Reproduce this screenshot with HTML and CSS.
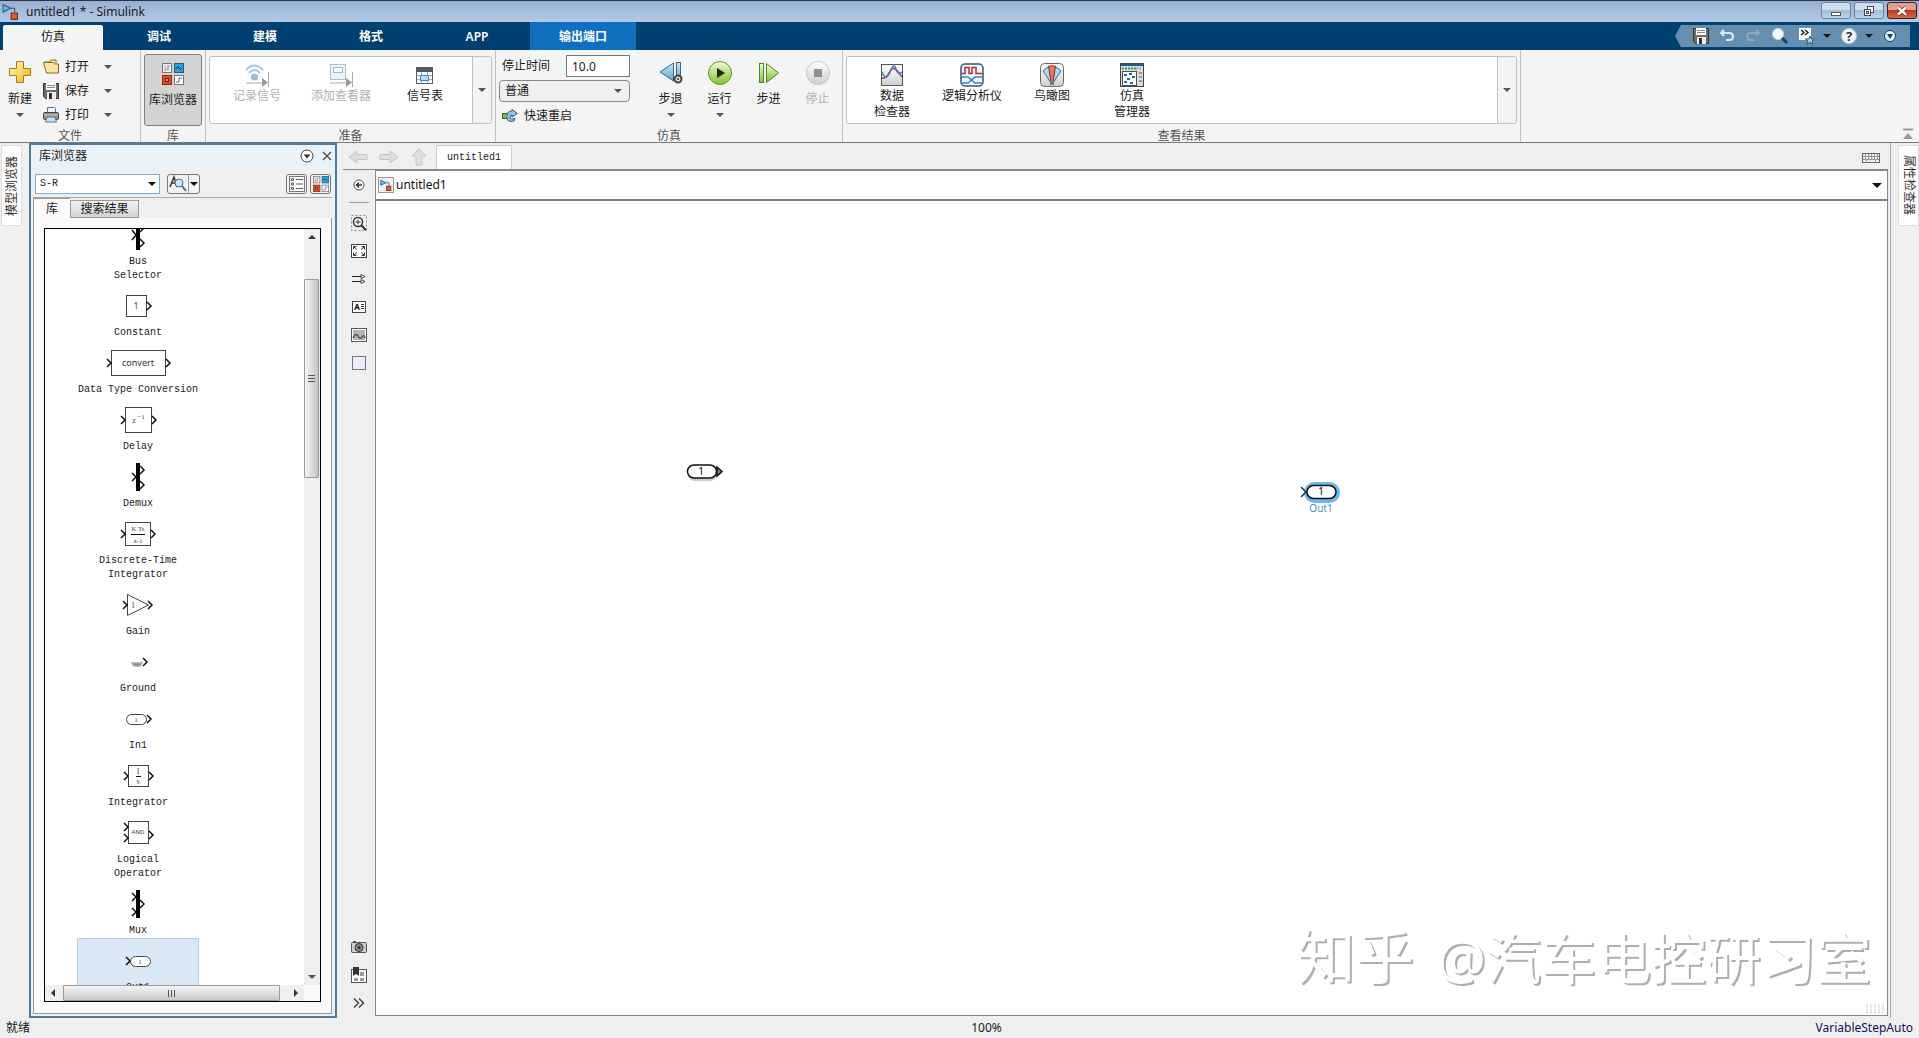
FILE: index.html
```html
<!DOCTYPE html>
<html lang="zh-CN">
<head>
    <meta charset="UTF-8">
    <meta name="viewport" content="width=device-width, initial-scale=1.0">
    <title>untitled1 * - Simulink</title>
    <link rel="stylesheet" href="styles.css">
</head>
<body>
    <!-- shared icons -->
    <svg class="defs" width="0" height="0" aria-hidden="true">
        <defs>
            <linearGradient id="g-gold" x1="0" y1="0" x2="1" y2="1"><stop offset="0" stop-color="#fffbd0"/><stop offset="1" stop-color="#eeb400"/></linearGradient>
            <linearGradient id="g-blue" x1="0" y1="0" x2="0" y2="1"><stop offset="0" stop-color="#cde9fa"/><stop offset="1" stop-color="#5b9fd0"/></linearGradient>
            <linearGradient id="g-green" x1="0" y1="0" x2="0" y2="1"><stop offset="0" stop-color="#effad8"/><stop offset="1" stop-color="#7cc52c"/></linearGradient>
            <linearGradient id="g-grey" x1="0" y1="0" x2="0" y2="1"><stop offset="0" stop-color="#ffffff"/><stop offset="1" stop-color="#cfcfcf"/></linearGradient>
            <symbol id="floppy" viewBox="0 0 16 16">
                <path d="M0.5 0.5h15v15h-13l-2-2z" fill="#6b6b6b" stroke="#333"/>
                <rect x="3" y="0" width="10" height="7" fill="#fff"/>
                <path d="M4 2.5h8M4 4.5h8" stroke="#888"/>
                <rect x="4" y="9" width="9" height="7" fill="#eee"/>
                <rect x="6" y="10" width="3" height="6" fill="#333"/>
            </symbol>
            <symbol id="libgrid" viewBox="0 0 22 22">
                <rect x="0.5" y="0.5" width="9" height="9" fill="#f4f4f4" stroke="#777"/>
                <path d="M3 2v6M3 8l5-6M6 2v6" stroke="#999" fill="none"/>
                <rect x="12.5" y="0.5" width="9" height="9" fill="#2aa0dc" stroke="#1b5f8a"/>
                <path d="M14 6q1.5-4 3-1t3 0" stroke="#063a5c" fill="none"/>
                <rect x="0.5" y="12.5" width="9" height="9" fill="#e04e22" stroke="#8a2a0a"/>
                <rect x="3.5" y="15.5" width="3" height="3" fill="#f7a080" stroke="#6d1c00"/>
                <rect x="12.5" y="12.5" width="9" height="9" fill="#fff" stroke="#777"/>
                <path d="M14 19h3v-4h3" stroke="#666" fill="none"/>
            </symbol>
            <symbol id="model" viewBox="0 0 16 16">
                <path d="M1 1.5l7 3.5-7 3.5z" fill="#6db9e4" stroke="#1b5f8a"/>
                <path d="M8 5h4v4" stroke="#1b5f8a" fill="none"/>
                <rect x="8.5" y="9.5" width="6" height="6" fill="#dd5a2b" stroke="#7c2a10"/>
            </symbol>
            <symbol id="arrow" viewBox="0 0 20 14">
                <path d="M1 7l8-6v3.5h10v5h-10v3.5z" fill="#dedede" stroke="#c4c4c4"/>
            </symbol>
        </defs>
    </svg>

    <header class="titlebar">
        <svg class="app-icon" width="17" height="17"><use href="#model"/></svg>
        <span class="window-title">untitled1 * - Simulink</span>
        <div class="window-buttons">
            <button class="win-btn" aria-label="最小化"><svg width="12" height="12"><rect x="1.5" y="7.5" width="9" height="3" fill="#fff" stroke="#555"/></svg></button>
            <button class="win-btn" aria-label="还原"><svg width="12" height="12"><rect x="4.5" y="1.5" width="6" height="6" fill="#fff" stroke="#445"/><rect x="1.5" y="4.5" width="6" height="6" fill="#fff" stroke="#445"/><rect x="3.5" y="6.5" width="2" height="2" fill="none" stroke="#445"/></svg></button>
            <button class="win-btn close" aria-label="关闭"><svg width="12" height="12"><path d="M2 2.5l8 7M10 2.5l-8 7" stroke="#622" stroke-width="4"/><path d="M2 2.5l8 7M10 2.5l-8 7" stroke="#fff" stroke-width="2.5"/></svg></button>
        </div>
    </header>

    <nav class="tabbar">
        <button class="tab active">仿真</button>
        <button class="tab">调试</button>
        <button class="tab">建模</button>
        <button class="tab">格式</button>
        <button class="tab">APP</button>
        <button class="tab context">输出端口</button>
        <div class="quick">
            <button aria-label="保存"><svg width="16" height="16"><use href="#floppy"/></svg></button>
            <button aria-label="撤销"><svg width="16" height="16"><path d="M5 2l-3 3 3 3M2 5h8q4 0 4 3.5t-4 3.5h-3" fill="none" stroke="#d6ecfa" stroke-width="2"/></svg></button>
            <button aria-label="重做"><svg width="16" height="16"><path d="M11 2l3 3-3 3M14 5h-8q-4 0-4 3.5t4 3.5h3" fill="none" stroke="#86a9c4" stroke-width="2"/></svg></button>
            <button aria-label="查找"><svg width="18" height="18"><path d="M10 10l6 6" stroke="#1c3b58" stroke-width="3"/><circle cx="7" cy="7" r="5.5" fill="#f4fafd" stroke="#c5d4de"/></svg></button>
            <button class="with-caret" aria-label="收藏"><svg width="16" height="17"><rect x="0" y="0" width="12" height="12" fill="#fff"/><path d="M2 2l3 2.5-3 2.5M6 2l3 2.5-3 2.5" fill="none" stroke="#222" stroke-width="1.5"/><path d="M11 8l1.3 3h3.2l-2.500 2 1 3.500-3-2-3 2 1-3.500-2.500-2h3.200z" fill="#a9cdec" stroke="#37597a"/></svg><i class="caret black"></i></button>
            <button class="with-caret" aria-label="帮助"><svg width="16" height="16"><circle cx="8" cy="8" r="7.5" fill="#f2f6f9" stroke="#b8c8d4"/><text x="8" y="13" class="help-mark">?</text></svg><i class="caret black"></i></button>
            <button aria-label="更多"><svg width="14" height="14"><circle cx="7" cy="7" r="5.5" fill="#e8f4fb" stroke="#0d3f66"/><path d="M4 5h6l-3 5z" fill="#0d3f66"/></svg></button>
        </div>
    </nav>

    <div class="ribbon">
        <section class="group file">
            <div class="group-body">
                <button class="big new">
                    <svg width="22" height="22"><path d="M7.5 0.5h7v7h7v7h-7v7h-7v-7h-7v-7h7z" fill="url(#g-gold)" stroke="#a87b10"/></svg>
                    <span>新建</span><i class="caret"></i>
                </button>
                <div class="stack">
                    <button class="small"><svg width="16" height="16"><path d="M1 3h6l1-2h5v3" fill="#f7e7a0" stroke="#8c6d1f"/><path d="M0.5 3.5l3 10.5h12v-9h-4l-1-1.5z" fill="#f8e6a0" stroke="#8c6d1f"/></svg><span>打开</span><i class="caret"></i></button>
                    <button class="small"><svg width="16" height="16"><use href="#floppy"/></svg><span>保存</span><i class="caret"></i></button>
                    <button class="small"><svg width="16" height="16"><path d="M4.5 6v-5.5h7l1 1v4.5" fill="#e6f1fa" stroke="#5c7288"/><rect x="0.5" y="5.5" width="15" height="7" rx="1" fill="#8b9094" stroke="#444"/><path d="M1 8h14" stroke="#d5d5d5"/><path d="M4 10h8l1.5 5h-11z" fill="#c9e2f5" stroke="#5c7288"/></svg><span>打印</span><i class="caret"></i></button>
                </div>
            </div>
            <h2>文件</h2>
        </section>

        <section class="group library">
            <div class="group-body">
                <button class="big pressed"><svg width="22" height="22"><use href="#libgrid"/></svg><span>库浏览器</span></button>
            </div>
            <h2>库</h2>
        </section>

        <section class="group prepare">
            <div class="group-body">
                <div class="gallery">
                    <button class="gallery-item" disabled><svg width="24" height="24"><path d="M1 7q8-9 17 0M4 10q5.5-6 11 0" fill="none" stroke="#a9c8dc" stroke-width="2"/><circle cx="9.5" cy="14" r="3.5" fill="#9dbdd3"/><path d="M1 20h18M23.5 9v15" stroke="#aaa"/><path d="M17 15l6 4.5-6 4.5z" fill="#999"/></svg><span>记录信号</span></button>
                    <button class="gallery-item" disabled><svg width="24" height="24"><rect x="1.5" y="1.5" width="15" height="15" fill="#edf4f8" stroke="#a9bfcc"/><rect x="4.5" y="4.5" width="9" height="5" fill="#fff" stroke="#9cbdd0"/><path d="M1 20h18M23.5 9v15" stroke="#aaa"/><path d="M17 15l6 4.5-6 4.5z" fill="#999"/></svg><span>添加查看器</span></button>
                    <button class="gallery-item"><svg width="18" height="24"><rect x="0.5" y="4.5" width="16" height="16" fill="#fff" stroke="#55606a"/><rect x="1" y="5" width="15" height="4" fill="#4d5a66"/><path d="M1 12.5h15M1 16.5h15M5.5 9v11M11.5 9v11" stroke="#9ab"/><rect x="4.5" y="12.5" width="8" height="5" fill="#b9dcf8" stroke="#4389c8"/></svg><span>信号表</span></button>
                    <button class="gallery-more" aria-label="展开准备"><i class="caret"></i></button>
                </div>
            </div>
            <h2>准备</h2>
        </section>

        <section class="group simulate">
            <div class="group-body">
                <div class="sim-form">
                    <div class="field"><label for="stop-time">停止时间</label><input id="stop-time" type="text" value="10.0"></div>
                    <div class="select-wrap"><select aria-label="仿真模式"><option>普通</option></select><i class="caret"></i></div>
                    <button class="small restart"><svg width="16" height="14"><rect x="0.5" y="4.5" width="6" height="5" fill="#7dbb58" stroke="#3b6b22"/><path d="M5 7q0-5 5-5v-1.5l5.5 4-5.5 3.5v-2q-2 0-2 2q0 3 5 1.5l-1 2.5q-7 2-7-4" fill="#8ec3ea" stroke="#2d5d86"/></svg><span>快速重启</span></button>
                </div>
                <button class="big"><svg width="24" height="24"><path d="M14.5 2v18l-13.5-9z" fill="url(#g-blue)" stroke="#37678c"/><rect x="17.5" y="1.5" width="4" height="18" fill="url(#g-blue)" stroke="#37678c"/><circle cx="19" cy="18" r="3.5" fill="#ddd" stroke="#444" stroke-width="2"/><circle cx="19" cy="18" r="1" fill="#333"/></svg><span>步退</span><i class="caret"></i></button>
                <button class="big"><svg width="24" height="24"><circle cx="12" cy="12" r="11.5" fill="url(#g-green)" stroke="#5d9a24"/><path d="M9 7v10l8-5z" fill="#222"/></svg><span>运行</span><i class="caret"></i></button>
                <button class="big"><svg width="24" height="24"><rect x="2.5" y="2.5" width="4" height="19" fill="url(#g-green)" stroke="#4f7e2c"/><path d="M9.5 2.5v19l12-9.5z" fill="url(#g-green)" stroke="#4f7e2c"/></svg><span>步进</span></button>
                <button class="big" disabled><svg width="24" height="24"><circle cx="12" cy="12" r="11.5" fill="url(#g-grey)" stroke="#c4c4c4"/><rect x="8" y="8" width="8" height="8" fill="#8f8f8f"/></svg><span>停止</span></button>
            </div>
            <h2>仿真</h2>
        </section>

        <section class="group results">
            <div class="group-body">
                <div class="gallery">
                    <button class="gallery-item"><svg width="24" height="24"><rect x="1.5" y="1.5" width="21" height="21" fill="url(#g-grey)" stroke="#555"/><path d="M2 15q4 1 7-5t6-4 7 8" fill="none" stroke="#b33a3a" stroke-width="1.5"/><path d="M2 9q4 10 8 0t6-3 6 3" fill="none" stroke="#3a7fb4" stroke-width="1.5"/></svg><span>数据<br>检查器</span></button>
                    <button class="gallery-item"><svg width="24" height="24"><rect x="1" y="1" width="22" height="22" rx="4" fill="#f4faff" stroke="#33567a" stroke-width="1.5"/><path d="M2 10.500h3v-6h4v6h3v-6h4v6h6" fill="none" stroke="#b32d2d" stroke-width="1.5"/><path d="M2 14h6l7 6h7M2 20h6l7-6h7" fill="none" stroke="#3b83bc" stroke-width="1.5"/></svg><span>逻辑分析仪</span></button>
                    <button class="gallery-item"><svg width="24" height="24"><rect x="0.5" y="0.5" width="23" height="23" rx="4" fill="url(#g-grey)" stroke="#666"/><path d="M11 20l-8-12q3-4 7-4zM13 20l8-12q-3-4-7-4z" fill="#a9d5f0" stroke="#356d96"/><path d="M8.500 3h7l-2.500 16h-2z" fill="#e8765c" stroke="#8f2e1c"/><rect x="10" y="18" width="4" height="4" fill="#777"/></svg><span>鸟瞰图</span></button>
                    <button class="gallery-item"><svg width="24" height="24"><rect x="0.5" y="0.5" width="23" height="23" fill="#dcdcdc" stroke="#444"/><rect x="1" y="1" width="22" height="2" fill="#1d5d8c"/><path d="M2 5.5h14" stroke="#3f9a3f" stroke-width="2" stroke-dasharray="2 1"/><path d="M16 5.5h6" stroke="#8ab7d8" stroke-width="2" stroke-dasharray="2 1"/><rect x="2.5" y="8.5" width="14" height="14" fill="#fff" stroke="#356"/><path d="M4 12h3M9 11h3M12 14h3M7 16h3M4 19h3M10 20h3" stroke="#2c6ca0" stroke-width="2"/><path d="M19 10h3M19 14h3M19 18h3" stroke="#555"/></svg><span>仿真<br>管理器</span></button>
                    <button class="gallery-more" aria-label="展开查看结果"><i class="caret"></i></button>
                </div>
            </div>
            <h2>查看结果</h2>
        </section>
        <button class="collapse" aria-label="折叠工具条"><svg width="12" height="12"><path d="M1 1.5h10" stroke="#999" stroke-width="2"/><path d="M1 11l5-6 5 6z" fill="#999"/></svg></button>
    </div>

    <main class="workspace">
        <aside class="dock left-dock"><button class="dock-tab">模型浏览器</button></aside>

        <section class="browser">
            <div class="browser-title">
                <h3>库浏览器</h3>
                <button aria-label="面板菜单"><svg width="14" height="14"><circle cx="7" cy="7" r="6" fill="#fff" stroke="#444"/><path d="M3.5 5.5h7l-3.5 4z" fill="#333"/></svg></button>
                <button aria-label="关闭面板"><svg width="10" height="10"><path d="M1 1l8 8M9 1l-8 8" stroke="#555" stroke-width="1.5"/></svg></button>
            </div>
            <div class="browser-tools">
                <div class="combo"><input type="text" value="S-R" aria-label="搜索库"><button aria-label="搜索历史"><i class="caret black"></i></button></div>
                <button class="tool search" aria-label="搜索"><svg width="18" height="18"><path d="M1 12l4-10 3 10M2 8h5" fill="none" stroke="#333" stroke-width="1.5"/><circle cx="10" cy="8" r="4" fill="#cfe6f5" stroke="#3b6d92"/><path d="M13 11l4 5" stroke="#3b6d92" stroke-width="2"/></svg><i class="divider"></i><i class="caret black"></i></button>
                <button class="tool first-right" aria-label="列表视图"><svg width="16" height="16"><rect x="0.5" y="0.5" width="15" height="15" fill="#fff" stroke="#777"/><path d="M2.5 2.5h2v2h-2zM2.5 7h2v2h-2zM2.5 11.5h2v2h-2z" fill="none" stroke="#555"/><path d="M7 3.5h7M7 8h7M7 12.5h7" stroke="#555"/></svg></button>
                <button class="tool" aria-label="图标视图"><svg width="16" height="16"><use href="#libgrid"/></svg></button>
            </div>
            <div class="browser-tabs"><button class="active">库</button><button>搜索结果</button></div>
            <div class="browser-page">
                <div class="list-frame">
                    <div class="list-view">
                        <ul class="blocks">
                            <li><svg width="60" height="40"><rect x="28" y="3" width="4" height="32"/><path d="M24 15l4 5-4 5M32 9l4 4-4 4M32 24l4 4-4 4"/></svg><span>Bus<br>Selector</span></li>
                            <li><svg width="60" height="40"><rect class="box" x="18.5" y="9.5" width="20" height="21"/><path d="M39 16l4 4-4 4"/><text x="28" y="23" class="sans">1</text></svg><span>Constant</span></li>
                            <li><svg width="70" height="40"><rect class="box" x="8.5" y="7.5" width="54" height="25"/><path d="M4 16l4 4-4 4M63 16l4 4-4 4"/><text x="35" y="23" class="sans large">convert</text></svg><span>Data Type Conversion</span></li>
                            <li><svg width="60" height="40"><rect class="box" x="17.5" y="7.5" width="26" height="25"/><path d="M13 16l4 4-4 4M44 16l4 4-4 4"/><text x="26" y="23" class="serif">z</text><text x="33" y="19" class="serif tiny">−1</text></svg><span>Delay</span></li>
                            <li><svg width="60" height="40"><rect x="28" y="6" width="4" height="28"/><path d="M24 16l4 4-4 4M32 9l4 4-4 4M32 24l4 4-4 4"/></svg><span>Demux</span></li>
                            <li><svg width="60" height="40"><rect class="box" x="17.5" y="8.5" width="25" height="23"/><path d="M13 16l4 4-4 4M43 16l4 4-4 4"/><path class="thin" d="M23 20.500h14"/><text x="30" y="17" class="serif tiny">K Ts</text><text x="30" y="29" class="serif tiny">z-1</text></svg><span>Discrete-Time<br>Integrator</span></li>
                            <li><svg width="60" height="40"><path class="box" d="M19.5 9.5v21l21-10.500z"/><path d="M15 16l4 4-4 4M40 16l4 4-4 4"/><text x="25" y="23" class="serif">1</text></svg><span>Gain</span></li>
                            <li><svg width="60" height="40"><path d="M24 21h10l-2 3h-6z" class="ground"/><path d="M35 16l4 4-4 4"/></svg><span>Ground</span></li>
                            <li><svg width="60" height="40"><rect class="box" x="18.5" y="15.5" width="20" height="10" rx="5"/><path d="M39 16l4 4-4 4"/><text x="28" y="23" class="serif tiny">1</text></svg><span>In1</span></li>
                            <li><svg width="60" height="40"><rect class="box" x="20.5" y="9.5" width="20" height="21"/><path d="M16 16l4 4-4 4M41 16l4 4-4 4"/><path class="thin" d="M28 20.500h5"/><text x="30" y="18" class="serif">1</text><text x="30" y="28" class="serif">s</text></svg><span>Integrator</span></li>
                            <li><svg width="60" height="40"><rect class="box" x="20.5" y="8.5" width="20" height="22"/><path d="M16 10l4 4-4 4M16 21l4 4-4 4M41 18l4 4-4 4"/><text x="30" y="21" class="sans tiny">AND</text></svg><span>Logical<br>Operator</span></li>
                            <li><svg width="60" height="40"><rect x="28" y="6" width="4" height="28"/><path d="M24 9l4 4-4 4M24 24l4 4-4 4M32 16l4 4-4 4"/></svg><span>Mux</span></li>
                            <li class="selected"><svg width="60" height="40"><rect class="box" x="22.5" y="15.5" width="20" height="10" rx="5"/><path d="M18 16l4 4-4 4"/><text x="32" y="23" class="serif tiny">1</text></svg><span>Out1</span></li>
                        </ul>
                    </div>
                    <div class="vbar"><button aria-label="向上"><i class="caret tri-up"></i></button><div class="thumb v"><i></i></div><button aria-label="向下"><i class="caret"></i></button></div>
                    <div class="hbar"><button aria-label="向左"><i class="caret tri-left"></i></button><div class="thumb h"><i></i></div><button aria-label="向右"><i class="caret tri-right"></i></button></div>
                </div>
            </div>
        </section>

        <section class="editor">
            <div class="doc-tabs">
                <button aria-label="后退"><svg width="20" height="14"><use href="#arrow"/></svg></button>
                <button aria-label="前进"><svg width="20" height="14"><path d="M19 7l-8-6v3.5h-10v5h10v3.5z" fill="#dedede" stroke="#c4c4c4"/></svg></button>
                <button aria-label="向上"><svg width="18" height="18"><path d="M9 1l-7 7h4v9h6v-9h4z" fill="#dedede" stroke="#c4c4c4"/></svg></button>
                <button class="doc-tab">untitled1</button>
                <svg class="keyboard" width="18" height="10"><rect x="0.5" y="0.5" width="17" height="9" fill="#eee" stroke="#666"/><path d="M1 3.5h16M1 6.5h16M3.5 1v6M6.5 1v6M9.5 1v6M12.5 1v6M15.5 1v6M4.5 7v3M13.5 7v3" stroke="#999"/></svg>
            </div>
            <div class="editor-body">
                <div class="palette">
                    <button class="back" aria-label="隐藏浏览器"><svg width="12" height="12"><circle cx="6" cy="6" r="5" fill="#fff" stroke="#555"/><path d="M9 6h-5M6 3.5l-2.5 2.5 2.5 2.5" stroke="#333" stroke-width="1.5" fill="none"/></svg></button>
                    <hr>
                    <button aria-label="缩放"><svg width="16" height="16"><rect x="0.5" y="0.5" width="15" height="15" fill="none" stroke="#888" stroke-dasharray="2 2"/><circle cx="7" cy="7" r="4.5" fill="#fff" stroke="#333" stroke-width="1.5"/><path d="M4.5 7h5M7 4.5v5" stroke="#333"/><path d="M10.5 10.5l4.5 4.5" stroke="#333" stroke-width="2"/></svg></button>
                    <button aria-label="适应视图"><svg width="16" height="14"><rect x="0.5" y="0.5" width="15" height="13" fill="#fff" stroke="#444"/><path d="M2.5 5.5v-3h3M10.5 2.5h3v3M13.5 8.5v3h-3M5.5 11.5h-3v-3M3 3l3 2.5M13 3l-3 2.5M3 11l3-2.5M13 11l-3-2.5" stroke="#333" fill="none"/></svg></button>
                    <button aria-label="信号线"><svg width="16" height="12"><path d="M1 3.5h10M1 8.5h10" stroke="#222"/><path d="M10 1.5l4 2-4 2zM10 6.5l4 2-4 2z" fill="#fff" stroke="#444"/></svg></button>
                    <button aria-label="注释"><svg width="14" height="12"><rect x="0.5" y="0.5" width="13" height="11" fill="#fff" stroke="#444"/><text x="5" y="9" class="note-a">A</text><path d="M9 3.5h3M9 5.5h3M9 7.5h3" stroke="#333"/></svg></button>
                    <button aria-label="图像"><svg width="16" height="14"><rect x="0.5" y="0.5" width="15" height="13" fill="#fff" stroke="#555"/><rect x="2" y="2" width="12" height="10" fill="#b4b4b4"/><path d="M2 10q3-6 5-2t4 1 3 1" fill="none" stroke="#555" stroke-width="1.5"/></svg></button>
                    <button aria-label="区域"><svg width="14" height="14"><rect x="0.5" y="0.5" width="13" height="13" fill="#ebebfb" stroke="#777"/></svg></button>
                    <button class="push-down" aria-label="截图"><svg width="16" height="12"><rect x="0.5" y="1.5" width="15" height="10" rx="1" fill="#ccc" stroke="#555"/><circle cx="8" cy="6.5" r="4" fill="#888" stroke="#333"/><circle cx="8" cy="6.5" r="1.5" fill="#333"/><path d="M2 0.5h3" stroke="#555"/></svg></button>
                    <button aria-label="书签"><svg width="16" height="16"><rect x="0.5" y="2.5" width="15" height="13" fill="#fff" stroke="#555"/><path d="M3 11h4v3h-4zM9 5h4v4h-4zM9 11h4v3h-4z" fill="#999"/><path d="M2 0h6v9l-3-2-3 2z" fill="#333"/></svg></button>
                    <button aria-label="更多工具"><svg width="12" height="12"><path d="M1 1.5l4.5 4.5-4.5 4.5M6 1.5l4.5 4.5-4.5 4.5" stroke="#444" stroke-width="1.5" fill="none"/></svg></button>
                </div>
                <div class="diagram">
                    <div class="breadcrumb">
                        <svg class="model-icon" width="16" height="16"><use href="#model"/></svg>
                        <a href="#">untitled1</a>
                        <button aria-label="层次结构"><i class="caret black"></i></button>
                    </div>
                    <div class="canvas">
                        <svg class="node in1" width="42" height="22"><rect x="3" y="5" width="29" height="14" rx="7" fill="#ccc"/><rect x="2.5" y="3" width="29" height="13" rx="6.5" fill="#fff" stroke="#111" stroke-width="1.5"/><path d="M32 5l5 4.5-5 4.5z" fill="#888" stroke="#111" stroke-width="1.5"/><text x="16" y="13">1</text></svg>
                        <svg class="node out1" width="42" height="34"><rect x="8" y="4" width="30" height="15" rx="7.5" fill="#fff" stroke="#6bb8ee" stroke-width="6"/><rect x="8" y="4.5" width="29" height="13" rx="6.5" fill="#fff" stroke="#111" stroke-width="1.5"/><path d="M2 6l5 5-5 5" fill="none" stroke="#12364e" stroke-width="1.5"/><text x="22" y="14">1</text><text x="22" y="31" class="node-name">Out1</text></svg>
                        <div class="watermark"><span class="brand">知乎</span> @汽车电控研习室</div>
                        <div class="grip"></div>
                    </div>
                </div>
            </div>
        </section>

        <aside class="dock right-dock"><button class="dock-tab">属性检查器</button></aside>
    </main>

    <footer class="statusbar">
        <span>就绪</span>
        <span class="zoom">100%</span>
        <a href="#" class="solver">VariableStepAuto</a>
    </footer>
</body>
</html>
```
FILE: styles.css
```css
* {
    box-sizing: border-box;
}
body {
    margin: 0;
    height: 100vh;
    display: flex;
    flex-direction: column;
    overflow: hidden;
    background-color: #efefef;
    color: #1a1a1a;
    font-family: "Noto Sans", "Noto Sans CJK SC", sans-serif;
    font-size: 12px;
    line-height: 16px;
}
button, input, select {
    font: inherit;
    color: inherit;
    margin: 0;
    padding: 0;
    border: none;
    background: none;
}
button {
    display: flex;
    align-items: center;
    justify-content: center;
    white-space: nowrap;
}
svg {
    display: block;
    flex: none;
}
h2, h3 {
    margin: 0;
    font-size: 12px;
    font-weight: normal;
}
.defs {
    position: absolute;
}
.caret {
    border: 4px solid transparent;
    border-top-color: #555;
    border-bottom: none;
}
.caret.black {
    border-top-color: #111;
}
.caret.tri-up {
    border-top: none;
    border-bottom: 4px solid #333;
}
.caret.tri-left {
    border: 4px solid transparent;
    border-right-color: #333;
    border-left: none;
}
.caret.tri-right {
    border: 4px solid transparent;
    border-left-color: #333;
    border-right: none;
}

/* title bar */
.titlebar {
    display: flex;
    align-items: center;
    height: 22px;
    flex: none;
    border-top: 1px solid #28344a;
    background: linear-gradient(#98b0d0, #b3cbe6);
    padding: 0 2px;
}
.window-title {
    flex: 1;
    margin-left: 7px;
}
.window-buttons {
    display: flex;
    gap: 3px;
    padding-top: 1px;
    align-self: flex-start;
}
.win-btn {
    width: 30px;
    height: 17px;
    border: 1px solid #6c84a4;
    border-radius: 3px;
    background: linear-gradient(#cfdded 45%, #a3bcd8 50%, #bdd2e8);
}
.win-btn.close {
    border-color: #4d1a1a;
    background: linear-gradient(#e0a090 45%, #c03a22 50%, #d7694c);
}

/* toolstrip tabs */
.tabbar {
    display: flex;
    align-items: flex-end;
    height: 28px;
    flex: none;
    background-color: #004070;
    padding-right: 9px;
}
.tab {
    width: 106px;
    height: 28px;
    padding-top: 1px;
    color: #fff;
    font-weight: 600;
}
.tab.active {
    width: 100px;
    height: 25px;
    margin: 0 3px;
    padding: 0 0 2px;
    background-color: #f5f5f5;
    color: #1a1a1a;
    font-weight: normal;
    border-radius: 2px 2px 0 0;
}
.tab.context {
    background-color: #1070c0;
}
.quick {
    display: flex;
    align-items: center;
    gap: 10px;
    height: 22px;
    margin: 0 0 3px auto;
    padding: 0 13px 0 18px;
    background-color: #668eae;
    clip-path: polygon(6px 0, 100% 0, 100% 100%, 6px 100%, 0 50%);
}
.with-caret {
    gap: 8px;
}
.help-mark {
    font-size: 13px;
    font-weight: bold;
    text-anchor: middle;
    fill: #333;
}

/* ribbon */
.ribbon {
    display: flex;
    height: 93px;
    flex: none;
    background-color: #f4f4f4;
    border-bottom: 1px solid #777;
}
.group {
    display: flex;
    flex-direction: column;
    border-right: 1px solid #c0c0c0;
}
.group-body {
    display: flex;
    flex: 1;
    padding: 4px 4px 0;
}
.group h2 {
    height: 14px;
    text-align: center;
    color: #555;
}
.group.file {
    width: 141px;
}
.group.library {
    width: 65px;
}
.group.prepare {
    width: 290px;
}
.group.simulate {
    width: 347px;
}
.group.results {
    width: 678px;
}
.big {
    display: flex;
    flex-direction: column;
    justify-content: flex-start;
    width: 49px;
    height: 72px;
    padding-top: 7px;
}
.big svg {
    height: 24px;
}
.big span {
    margin: 6px 0;
}
.big:disabled, .gallery-item:disabled {
    color: #b0b0b0;
}
.big.new {
    width: 32px;
}
.big.pressed {
    width: 58px;
    border: 1px solid #808080;
    border-radius: 3px;
    background-color: #d4d4d4;
}
.library .group-body {
    padding: 4px 3px 0;
}
.stack {
    display: flex;
    flex-direction: column;
    gap: 8px;
    padding: 5px 0 0 7px;
}
.small {
    gap: 6px;
    height: 16px;
}
.small .caret {
    margin-left: 9px;
}
.gallery {
    display: flex;
    flex: 1;
    height: 68px;
    margin-top: 2px;
    background-color: #fff;
    border: 1px solid #c0c0c0;
    border-radius: 3px;
}
.prepare .group-body, .results .group-body {
    padding: 4px 3px 0;
}
.prepare .gallery, .results .gallery {
    padding-left: 5px;
}
.gallery-item {
    flex-direction: column;
    justify-content: flex-start;
    width: 84px;
    padding-top: 6px;
}
.gallery-item span {
    margin-top: 1px;
}
.results .gallery-item {
    width: 80px;
}
.gallery-more {
    width: 19px;
    margin-left: auto;
    background-color: #f4f4f4;
    border-left: 1px solid #c0c0c0;
    border-radius: 0 3px 3px 0;
}
.simulate .group-body {
    padding: 5px 0 0 3px;
}
.simulate .big {
    padding-top: 6px;
}
.sim-form {
    display: flex;
    flex-direction: column;
    flex: none;
    gap: 3px;
    width: 131px;
    margin-right: 16px;
}
.field {
    display: flex;
    align-items: center;
    justify-content: space-between;
    padding-left: 3px;
}
.field input {
    width: 64px;
    height: 22px;
    padding: 0 5px;
    border: 1px solid #777;
    background-color: #fff;
}
.select-wrap {
    display: grid;
    align-items: center;
}
.select-wrap select, .select-wrap .caret {
    grid-area: 1 / 1;
}
.select-wrap select {
    appearance: none;
    height: 22px;
    padding: 0 5px;
    border: 1px solid #888;
    border-radius: 4px;
    background-color: #f0f0f0;
}
.select-wrap .caret {
    justify-self: end;
    margin-right: 8px;
    pointer-events: none;
}
.restart {
    align-self: flex-start;
    margin: 3px 0 0 3px;
}
.collapse {
    align-self: flex-end;
    margin: 0 5px 2px auto;
}

/* workspace */
.workspace {
    display: flex;
    flex: 1;
    min-height: 0;
}
.dock {
    width: 29px;
    padding: 2px 1px;
}
.right-dock {
    border-left: 1px solid #aaa;
    padding-left: 7px;
}
.dock-tab {
    width: 21px;
    height: 81px;
    background-color: #fff;
    border: 1px solid #ddd;
    color: #333;
    writing-mode: vertical-rl;
    text-orientation: sideways;
}
.left-dock .dock-tab {
    transform: rotate(180deg);
}

/* library browser */
.browser {
    display: flex;
    flex-direction: column;
    width: 308px;
    padding: 1px 3px 2px 2px;
    border: 2px solid #4f7a9a;
    background-color: #eaf2f9;
}
.browser-title {
    display: flex;
    align-items: center;
    gap: 8px;
    height: 24px;
    padding: 0 0 5px 6px;
}
.browser-title h3 {
    flex: 1;
}
.browser-tools {
    display: flex;
    align-items: center;
    gap: 3px;
    height: 28px;
    padding: 0 1px 0 2px;
    background-color: #efefef;
    border-bottom: 1px solid #aaa;
}
.combo {
    display: flex;
    width: 125px;
    height: 20px;
    background-color: #fff;
    border: 1px solid #7ab0cc;
}
.combo input {
    flex: 1;
    min-width: 0;
    padding-left: 4px;
    font-family: "Liberation Mono", monospace;
    font-size: 10px;
}
.combo button {
    width: 15px;
}
.tool {
    width: 21px;
    height: 20px;
    border: 1px solid #777;
    border-radius: 3px;
    background-color: #f2f2f2;
}
.tool.search {
    width: 33px;
    gap: 1px;
    margin-left: 4px;
}
.divider {
    height: 18px;
    border-left: 1px solid #999;
}
.tool.first-right {
    margin-left: auto;
}
.browser-tabs {
    display: flex;
    align-items: flex-end;
    height: 20px;
    margin-bottom: -1px;
    z-index: 1;
    background-color: #efefef;
}
.browser-tabs button {
    width: 69px;
    height: 18px;
    border: 1px solid #999;
    background: linear-gradient(#f2f2f2, #d2d2d2);
}
.browser-tabs button.active {
    width: 37px;
    height: 20px;
    background: #fafafa;
    border-bottom: none;
    border-right: none;
}
.browser-page {
    display: flex;
    flex: 1;
    min-height: 0;
    padding: 10px 10px 11px;
    border: 1px solid #999;
    background-color: #fafafa;
}
.list-frame {
    display: grid;
    flex: 1;
    min-height: 0;
    grid-template-columns: 1fr 16px;
    grid-template-rows: 1fr 16px;
    border: 1px solid #000;
}
.list-view {
    overflow: hidden;
    min-height: 0;
    background-color: #fff;
}
.blocks {
    list-style: none;
    margin: -17px 0 0 32px;
    padding: 0;
    width: 122px;
    font-family: "Liberation Mono", monospace;
    font-size: 10px;
    line-height: 14px;
}
.blocks li {
    display: flex;
    flex-direction: column;
    align-items: center;
    padding-top: 3px;
    text-align: center;
}
.blocks li.selected {
    background-color: #dae8f5;
    box-shadow: inset 0 0 0 1px #b5cfe6;
}
.blocks path {
    fill: none;
    stroke: #111;
    stroke-width: 1.5;
}
.blocks .box {
    fill: #fff;
    stroke: #444;
    stroke-width: 1;
}
.blocks .thin {
    stroke-width: 1;
}
.blocks .ground {
    fill: #888;
    stroke: #aaa;
}
.blocks text {
    text-anchor: middle;
    fill: #333;
    font-size: 8px;
}
.blocks .sans {
    font-family: "Noto Sans", sans-serif;
}
.blocks .serif {
    font-family: "Liberation Serif", serif;
    fill: #444;
}
.blocks text.large {
    font-size: 9px;
}
.blocks text.tiny {
    font-size: 7px;
}
.blocks text.sans.tiny {
    font-size: 6px;
}
.vbar, .hbar {
    display: flex;
    background-color: #efefef;
}
.vbar {
    flex-direction: column;
}
.vbar button, .hbar button {
    width: 16px;
    height: 16px;
}
.thumb {
    display: flex;
    align-items: center;
    justify-content: center;
    border: 1px solid #999;
    border-radius: 1px;
}
.thumb.v {
    height: 199px;
    margin: 34px 1px auto 0;
    background: linear-gradient(90deg, #f5f5f5, #c4c4c8);
}
.thumb.h {
    flex: 1;
    margin: 0 8px 0 2px;
    background: linear-gradient(#f5f5f5, #c8c8c8);
}
.thumb.v i {
    width: 7px;
    height: 8px;
    background: repeating-linear-gradient(#555 0 1px, transparent 1px 3px);
}
.thumb.h i {
    width: 8px;
    height: 7px;
    background: repeating-linear-gradient(90deg, #555 0 1px, transparent 1px 3px);
}

/* editor */
.editor {
    display: flex;
    flex: 1;
    flex-direction: column;
    min-width: 0;
    margin: 0 2px 2px 6px;
}
.doc-tabs {
    display: flex;
    align-items: center;
    gap: 11px;
    height: 27px;
    padding: 2px 0 0 5px;
    border-bottom: 1px solid #888;
}
.doc-tab {
    align-self: flex-end;
    width: 76px;
    height: 24px;
    margin-left: -3px;
    background-color: #fff;
    border: 1px solid #ccc;
    border-bottom: none;
    font-family: "Liberation Mono", monospace;
    font-size: 10px;
}
.keyboard {
    margin: 2px 8px 0 auto;
}
.editor-body {
    display: flex;
    flex: 1;
    min-height: 0;
}
.palette {
    display: flex;
    flex-direction: column;
    align-items: center;
    gap: 12px;
    width: 32px;
    padding: 7px 0 5px;
}
.palette button {
    height: 16px;
}
.palette hr {
    width: 20px;
    margin: -3px 0 0;
    border: none;
    border-top: 1px solid #999;
}
.palette .push-down {
    margin-top: auto;
}
.note-a {
    font-size: 8px;
    font-weight: bold;
    text-anchor: middle;
}
.diagram {
    display: flex;
    flex: 1;
    flex-direction: column;
    border: 1px solid #888;
    background-color: #fff;
}
.breadcrumb {
    display: flex;
    align-items: center;
    gap: 2px;
    height: 30px;
    padding: 0 5px 0 2px;
    border-bottom: 2px solid #808080;
}
.breadcrumb a {
    color: #111;
    text-decoration: none;
}
.model-icon {
    padding: 1px;
    border: 1px solid #999;
    background-color: #eef2f5;
}
.breadcrumb button {
    margin-left: auto;
}
.breadcrumb .caret {
    border-width: 5px 5px 0;
}
.canvas {
    position: relative;
    flex: 1;
}
.node {
    position: absolute;
    font-size: 10px;
    text-anchor: middle;
}
.in1 {
    left: 309px;
    top: 261px;
}
.out1 {
    left: 923px;
    top: 280px;
    overflow: visible;
}
.node-name {
    fill: #4a90c4;
}
.watermark {
    position: absolute;
    right: 16px;
    bottom: 24px;
    color: #fff;
    font-size: 55px;
    line-height: 66px;
    text-shadow: 2px 2px 0 #aeaeae;
    white-space: nowrap;
}
.watermark .brand {
    margin-right: 8px;
    font-size: 59px;
}
.grip {
    position: absolute;
    right: 1px;
    bottom: 1px;
    width: 20px;
    height: 10px;
    background: repeating-linear-gradient(90deg, #e8e8e8 0 2px, #fff 2px 4px);
}

/* status bar */
.statusbar {
    display: grid;
    grid-template-columns: 1fr auto 1fr;
    align-items: center;
    height: 20px;
    flex: none;
    padding: 0 6px;
}
.statusbar .zoom {
    padding-left: 54px;
}
.statusbar .solver {
    justify-self: end;
    color: #101060;
    text-decoration: none;
}
```
